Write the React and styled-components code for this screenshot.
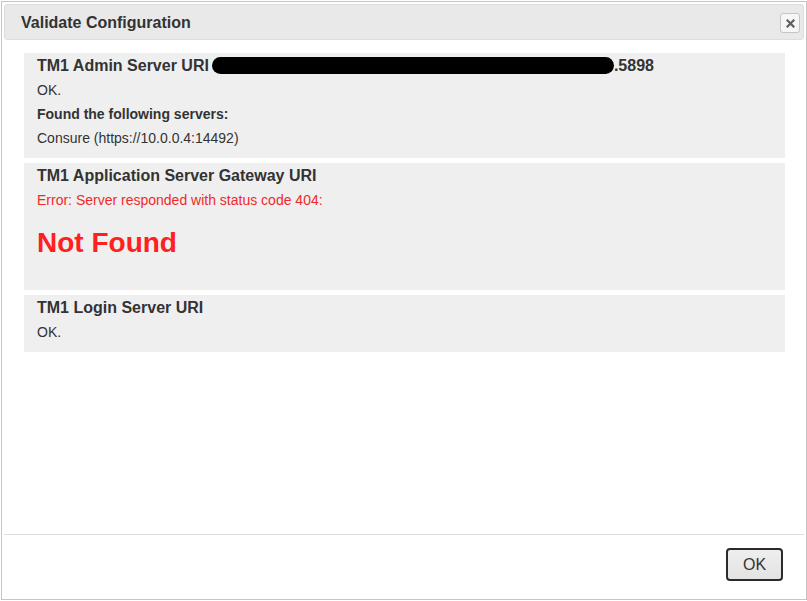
import styled, { createGlobalStyle } from 'styled-components'

const GlobalStyle = createGlobalStyle`
  html, body {
    margin: 0;
    padding: 0;
    background: #ffffff;
  }
  body {
    font-family: "Liberation Sans", Arial, sans-serif;
    color: #333333;
  }
`

const Page = styled.div`
  padding: 1px 0 0 1px;
`

const Dialog = styled.div`
  width: 806px;
  height: 599px;
  box-sizing: border-box;
  border: 1px solid #c5c5c5;
  padding: 2px;
  display: flex;
  flex-direction: column;
  background: #ffffff;
`

const TitleBar = styled.div`
  height: 36px;
  box-sizing: border-box;
  border: 1px solid #dddddd;
  border-radius: 3px;
  background: #e9e9e9;
  padding: 2px 3px 0 16px;
  display: flex;
  align-items: center;
  justify-content: space-between;
`

const Title = styled.span`
  font-size: 16px;
  font-weight: bold;
  color: #333333;
`

const CloseButton = styled.button`
  width: 20px;
  height: 20px;
  padding: 0;
  box-sizing: border-box;
  border: 1px solid #c5c5c5;
  border-radius: 3px;
  background: #f6f6f6;
  display: flex;
  align-items: center;
  justify-content: center;
`

const Content = styled.div`
  flex: 1;
  padding: 13px 19px 0 20px;
  display: flex;
  flex-direction: column;
  gap: 5px;
`

const Section = styled.div`
  background: #efefef;
  padding: 1px 13px 8px;
`

const Heading = styled.div`
  font-size: 16px;
  font-weight: bold;
  line-height: 24px;
  color: #333333;
  white-space: nowrap;
`

const Redacted = styled.span`
  display: inline-block;
  width: 402px;
  height: 17px;
  margin: 0 0 0 3px;
  border-radius: 9px;
  background: #000000;
  vertical-align: -3px;
`

const Line = styled.div`
  font-size: 14px;
  line-height: 24px;
  font-weight: ${p => (p.$bold ? 'bold' : 'normal')};
  color: ${p => (p.$error ? '#ee2a2a' : '#333333')};
`

const BigError = styled.div`
  font-size: 28px;
  font-weight: bold;
  line-height: 36px;
  color: #ff2020;
  margin: 13px 0 21px;
`

const Footer = styled.div`
  height: 63px;
  box-sizing: border-box;
  border-top: 1px solid #dddddd;
  padding: 13px 21px 0 0;
  display: flex;
  justify-content: flex-end;
  align-items: flex-start;
`

const OkButton = styled.button`
  width: 57px;
  height: 33px;
  box-sizing: border-box;
  border: 2px solid #2b2b2b;
  border-radius: 4px;
  background: linear-gradient(#eeeeee, #e3e3e3);
  font-family: "Liberation Sans", Arial, sans-serif;
  font-size: 16px;
  color: #333333;
  padding: 0;
`

const App = () => {
  return (
    <Page>
      <GlobalStyle />
      <Dialog>
        <TitleBar>
          <Title>Validate Configuration</Title>
          <CloseButton aria-label="Close">
            <svg width="9" height="9" viewBox="0 0 9 9">
              <path d="M1.5 1.5 L7.5 7.5 M7.5 1.5 L1.5 7.5" stroke="#5f5f5f" strokeWidth="2.2" strokeLinecap="square" />
            </svg>
          </CloseButton>
        </TitleBar>

        <Content>
          <Section>
            <Heading>
              TM1 Admin Server URI<Redacted />.5898
            </Heading>
            <Line>OK.</Line>
            <Line $bold>Found the following servers:</Line>
            <Line>Consure (https://10.0.0.4:14492)</Line>
          </Section>

          <Section>
            <Heading>TM1 Application Server Gateway URI</Heading>
            <Line $error>Error: Server responded with status code 404:</Line>
            <BigError>Not Found</BigError>
          </Section>

          <Section>
            <Heading>TM1 Login Server URI</Heading>
            <Line>OK.</Line>
          </Section>
        </Content>

        <Footer>
          <OkButton>OK</OkButton>
        </Footer>
      </Dialog>
    </Page>
  )
}

export default App
